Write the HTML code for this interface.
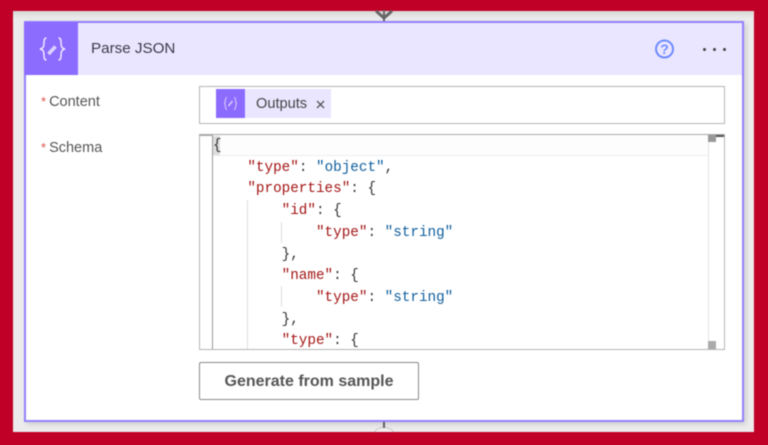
<!DOCTYPE html>
<html>
<head>
<meta charset="utf-8">
<style>
html,body{margin:0;padding:0;width:768px;height:445px;overflow:hidden;background:#c00027;font-family:"Liberation Sans",sans-serif}
.abs,.abs *{box-sizing:border-box}
.abs{position:absolute}
#wrap{position:absolute;left:0;top:0;width:768px;height:445px;overflow:hidden;filter:blur(.5px)}
#panel{left:13px;top:11px;width:741px;height:421px;background:linear-gradient(#d8d8d8,#ececec 8px);border-right:1px solid #f3dfe3}
#card{left:24px;top:21px;width:720px;height:401px;background:#fff;border:2px solid #9482ff;box-shadow:2px 2px 5px rgba(0,0,0,.14)}
#head{left:26px;top:23px;width:716px;height:52px;background:#ebe6ff}
#icon{left:24px;top:22px;width:54px;height:53px;background:#8c6cff}
.lab{font-size:14.500px;color:#555;line-height:16px}
.lab i{font-style:normal;color:#d9534f;font-size:13px;margin-right:3px}
.box{background:#fff;border:1px solid #b4b4b4}
.code{font-family:"Liberation Mono",monospace;font-size:14.300px;line-height:21.700px;white-space:pre;color:#333;left:213px;letter-spacing:0}
.k{color:#a31515}.s{color:#0f5e9c}
.guide{background:#dedede;width:1px}
</style>
</head>
<body>
<div id="wrap">
<div class="abs" id="panel"></div>
<svg class="abs" style="left:374px;top:10px" width="20" height="11" viewBox="0 0 20 11"><path d="M2 1L10 8L18 1" fill="none" stroke="#666" stroke-width="3"/><path d="M10 0V11" stroke="#666" stroke-width="2"/></svg>
<div class="abs" style="left:373px;top:427px;width:22px;height:16px;border:1px solid #c8c8c8;border-radius:50%;background:#f1f1f1"></div>
<div class="abs" style="left:383px;top:422px;width:2px;height:6px;background:#666"></div>
<div class="abs" style="left:0;top:432px;width:768px;height:13px;background:#c00027"></div>
<div class="abs" id="card"></div>
<div class="abs" id="head"></div>
<div class="abs" id="icon">
<svg width="54" height="53" viewBox="0 0 54 53" fill="none" stroke="#efeaff" stroke-width="1.500"><g transform="translate(1.500 0)"><path d="M21 16C17.500 16 19 21.500 18 24.500C17.500 26 16.500 26.500 14.500 27C16.500 27.500 17.500 28 18 29.500C19 32.500 17.500 38 21 38"/><path d="M33 16C36.500 16 35 21.500 36 24.500C36.500 26 37.500 26.500 39.500 27C37.500 27.500 36.500 28 36 29.500C35 32.500 36.500 38 33 38"/><path d="M23 32L30 24.500" stroke="#dcd4ff" stroke-width="3.500"/></g></svg>
</div>
<div class="abs" style="left:91px;top:40px;font-size:15.200px;line-height:18px;color:#3a3a4a">Parse JSON</div>
<svg class="abs" style="left:654px;top:39px" width="21" height="21" viewBox="0 0 21 21"><circle cx="10.500" cy="10" r="8.500" fill="none" stroke="#6f8cff" stroke-width="2"/><text x="10.500" y="15" text-anchor="middle" font-family="Liberation Sans" font-size="14" font-weight="bold" fill="#6f8cff">?</text></svg>
<div class="abs" style="left:703px;top:48px;width:3px;height:3px;background:#444;border-radius:50%"></div>
<div class="abs" style="left:713px;top:48px;width:3px;height:3px;background:#444;border-radius:50%"></div>
<div class="abs" style="left:723px;top:48px;width:3px;height:3px;background:#444;border-radius:50%"></div>

<div class="abs lab" style="left:41px;top:94px"><i>*</i>Content</div>
<div class="abs lab" style="left:41px;top:140px"><i>*</i>Schema</div>

<div class="abs box" style="left:199px;top:86px;width:526px;height:38px"></div>
<div class="abs" style="left:216px;top:89px;width:115px;height:29px;background:#ebe6ff"></div>
<div class="abs" style="left:216px;top:89px;width:29px;height:29px;background:#8c6cff">
<svg width="29" height="29" viewBox="0 0 29 29" fill="none" stroke="#d8ceff" stroke-width="1"><path d="M11 8.500C8.500 8.500 10 13 8.500 14.500C10 16 8.500 20.500 11 20.500"/><path d="M18 8.500C20.500 8.500 19 13 20.500 14.500C19 16 20.500 20.500 18 20.500"/><path d="M12.500 17L16.500 12" stroke-width="1.500"/></svg>
</div>
<div class="abs" style="left:256px;top:96px;font-size:14.600px;line-height:16px;color:#444">Outputs</div>
<svg class="abs" style="left:316px;top:100px" width="9" height="9" viewBox="0 0 9 9"><path d="M1 1L8 8M8 1L1 8" stroke="#555" stroke-width="1.300"/></svg>

<div class="abs" style="left:199px;top:134px;width:526px;height:216px;background:#fff;border:1px solid #b4b4b4;border-top:2px solid #a8a8a8;overflow:hidden"></div>
<div class="abs" style="left:213px;top:135px;width:495px;height:21px;border-bottom:1px solid #eee;background:#fdfdfd"></div>
<div class="abs" style="left:212px;top:135px;width:1px;height:214px;background:#999"></div>
<div class="abs" style="left:213px;top:136px;width:7px;height:19px;background:#ddd"></div>
<div class="abs guide" style="left:247px;top:200px;height:149px"></div>
<div class="abs guide" style="left:281px;top:222px;height:21px"></div>
<div class="abs guide" style="left:281px;top:286px;height:21px"></div>
<div class="abs" style="left:708px;top:135px;width:1px;height:214px;background:#e4e4e4"></div>
<div class="abs" style="left:708px;top:135px;width:16px;height:2px;background:#555"></div>
<div class="abs" style="left:708px;top:135px;width:8px;height:7px;background:#999"></div>
<div class="abs" style="left:708px;top:341px;width:8px;height:8px;background:#aaa"></div>
<div class="abs code" style="top:136px;height:213px;overflow:hidden;width:490px">{
    <span class="k">"type"</span>: <span class="s">"object"</span>,
    <span class="k">"properties"</span>: {
        <span class="k">"id"</span>: {
            <span class="k">"type"</span>: <span class="s">"string"</span>
        },
        <span class="k">"name"</span>: {
            <span class="k">"type"</span>: <span class="s">"string"</span>
        },
        <span class="k">"type"</span>: {</div>

<div class="abs" style="left:199px;top:362px;width:220px;height:38px;border:1px solid #8a8a8a;border-radius:2px;background:#fff;text-align:center;font-size:16px;font-weight:bold;line-height:38px;color:#555">Generate from sample</div>
</div>
</body>
</html>
